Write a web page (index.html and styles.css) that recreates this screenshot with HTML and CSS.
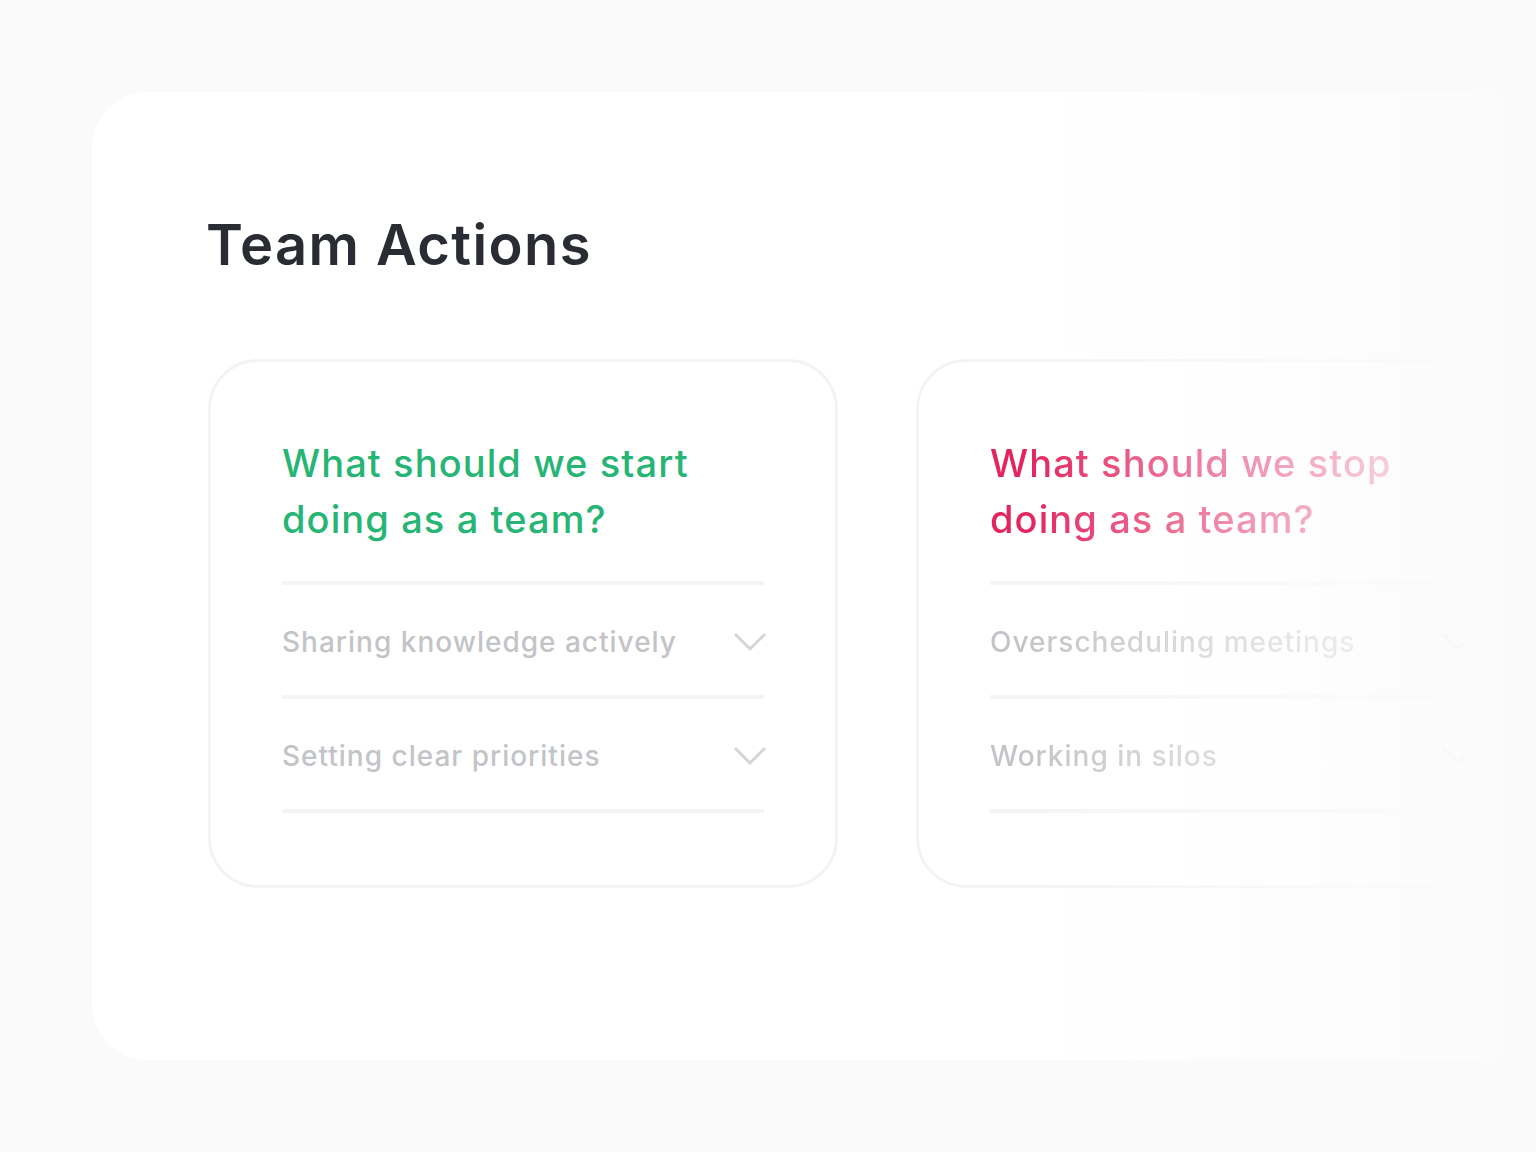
FILE: index.html
```html
<!DOCTYPE html>
<html lang="en">
<head>
    <meta charset="UTF-8">
    <meta name="viewport" content="width=device-width, initial-scale=1.0">
    <title>Team Actions</title>
    <link rel="stylesheet" href="styles.css">
</head>
<body>
    <div class="panel">
        <h1 class="title">Team Actions</h1>

        <div class="cards">
            <!-- Start doing -->
            <div class="card">
                <h2 class="question start">What should we start doing as a team?</h2>
                <ul class="answers">
                    <li class="answer">
                        <span>Sharing knowledge actively</span>
                        <svg class="chevron" width="34" height="20" viewBox="0 0 34 20"><polyline points="2,2 17,17 32,2"/></svg>
                    </li>
                    <li class="answer">
                        <span>Setting clear priorities</span>
                        <svg class="chevron" width="34" height="20" viewBox="0 0 34 20"><polyline points="2,2 17,17 32,2"/></svg>
                    </li>
                </ul>
            </div>

            <!-- Stop doing -->
            <div class="card faded">
                <h2 class="question stop">What should we stop doing as a team?</h2>
                <ul class="answers">
                    <li class="answer">
                        <span>Overscheduling meetings</span>
                        <svg class="chevron" width="34" height="20" viewBox="0 0 34 20"><polyline points="2,2 17,17 32,2"/></svg>
                    </li>
                    <li class="answer">
                        <span>Working in silos</span>
                        <svg class="chevron" width="34" height="20" viewBox="0 0 34 20"><polyline points="2,2 17,17 32,2"/></svg>
                    </li>
                </ul>
            </div>
        </div>
    </div>
</body>
</html>
```

FILE: styles.css
```css
* {
    margin: 0;
    padding: 0;
    box-sizing: border-box;
}

body {
    font-family: 'Inter', 'Noto Sans', sans-serif;
    background: #fafafa;
    padding: 92px 36px 92px 92px;
    height: 1152px;
    overflow: hidden;
}

.panel {
    height: 968px;
    border-radius: 56px 0 0 56px;
    background: linear-gradient(to right, #ffffff 0%, #ffffff 68%, #fbfbfb 100%);
    padding: 120px 0 0 116px;
    overflow: hidden;
}

.title {
    font-size: 56px;
    font-weight: 600;
    line-height: 67px;
    color: #2a2c33;
    letter-spacing: 1.4px;
    margin-left: -2px;
}

.cards {
    display: flex;
    gap: 78px;
    margin-top: 80px;
}

.card {
    flex: 0 0 630px;
    height: 529px;
    border: 3px solid #f3f3f3;
    border-radius: 50px;
    padding: 73px 71px;
    background: #fff;
}

.card.faded {
    -webkit-mask-image: linear-gradient(to right, #000 0, #000 110px, rgba(0, 0, 0, 0.55) 300px, rgba(0, 0, 0, 0.04) 560px);
    mask-image: linear-gradient(to right, #000 0, #000 110px, rgba(0, 0, 0, 0.55) 300px, rgba(0, 0, 0, 0.04) 560px);
}

.question {
    font-size: 38px;
    font-weight: 500;
    line-height: 56px;
    letter-spacing: 1.1px;
    margin-bottom: 34px;
}

.question.start {
    color: #27b576;
}

.question.stop {
    color: #e3245f;
}

.answers {
    list-style: none;
    border-bottom: 4px solid #f4f4f4;
}

.answer {
    display: flex;
    align-items: center;
    justify-content: space-between;
    height: 114px;
    padding-top: 4px;
    border-top: 4px solid #f4f4f4;
    font-size: 28px;
    font-weight: 500;
    letter-spacing: 1px;
    color: #c3c4c7;
}

.chevron {
    fill: none;
    stroke: #d5d5d7;
    stroke-width: 3;
    margin-right: -3px;
}
```
